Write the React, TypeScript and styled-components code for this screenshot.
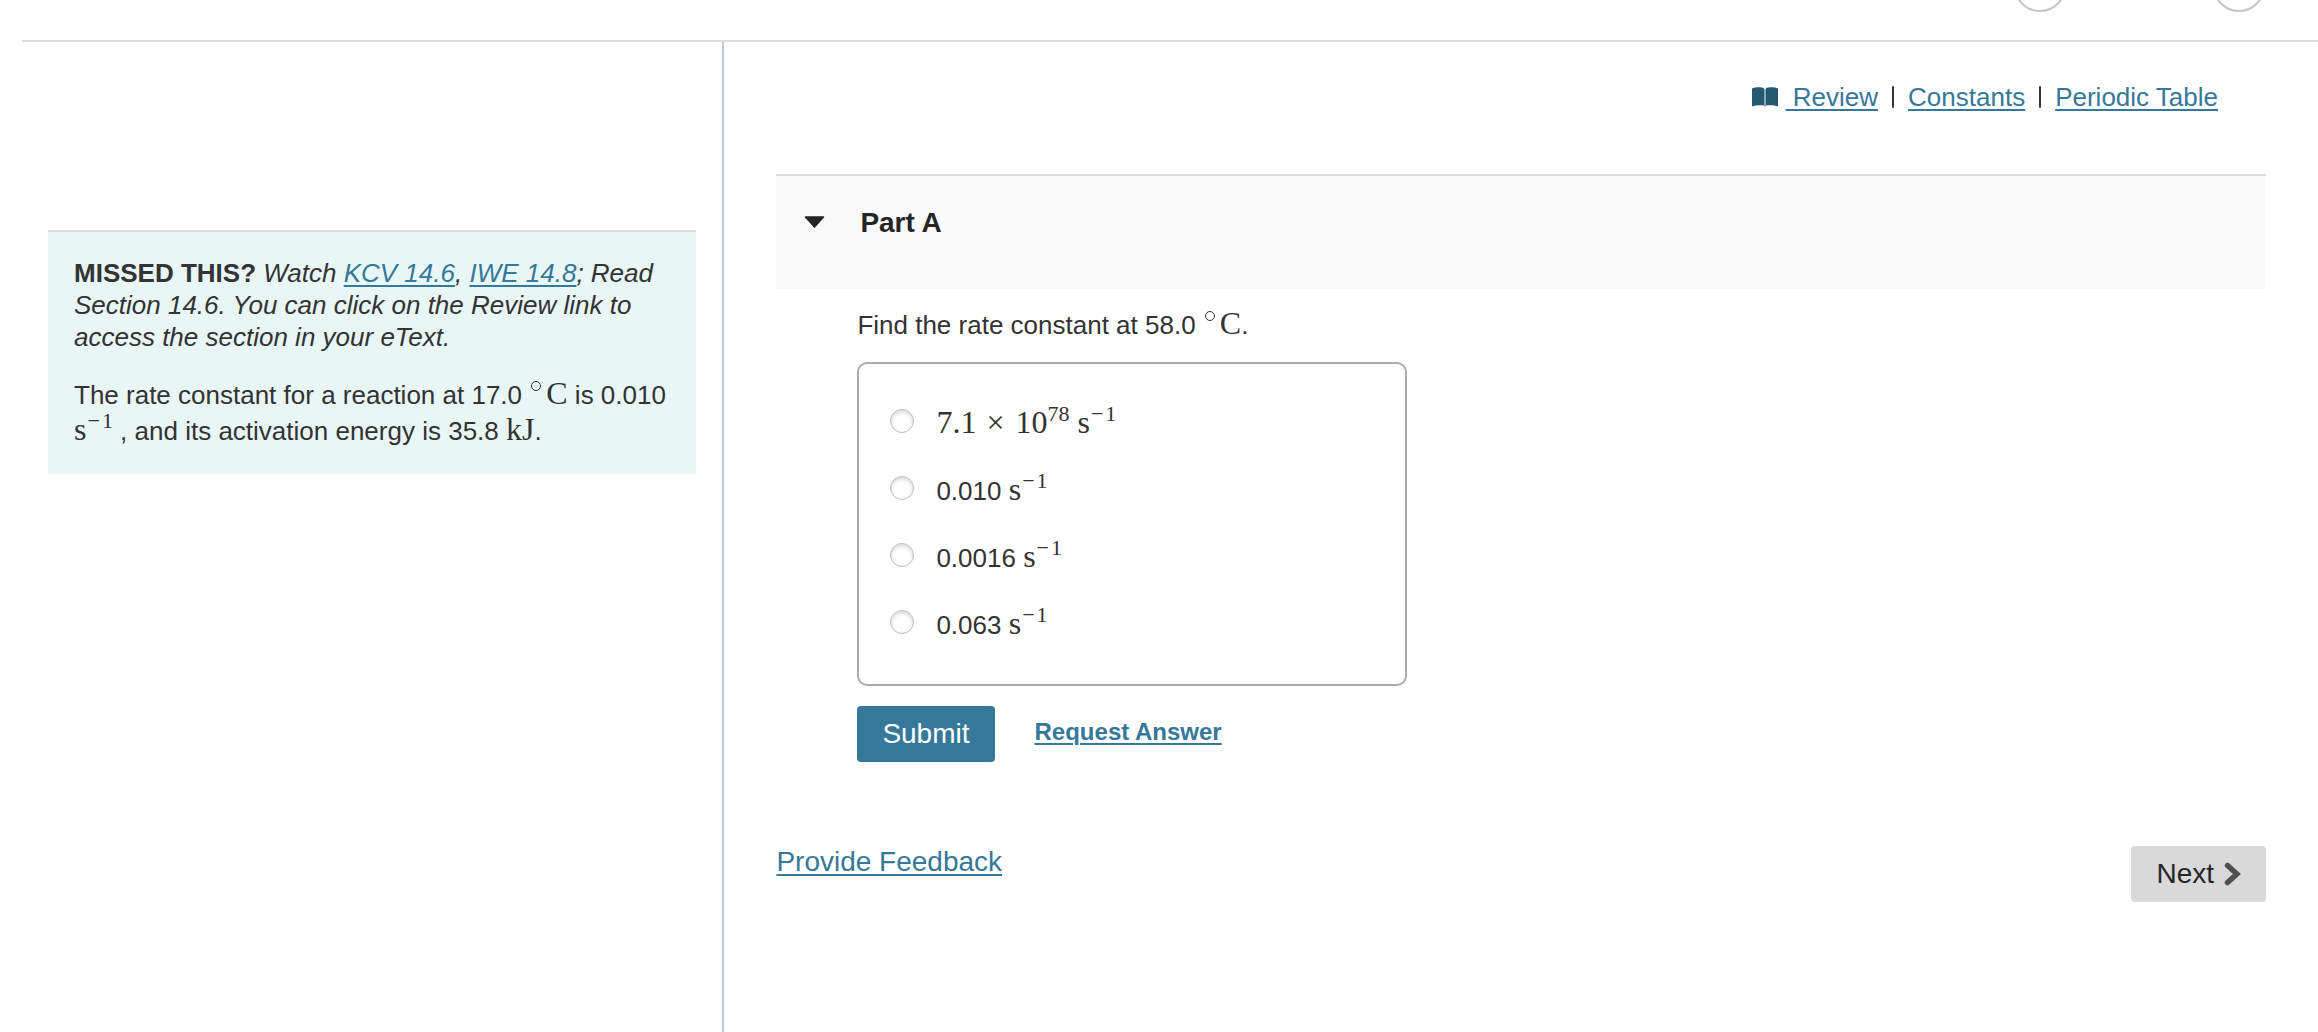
import React, { useState } from "react";
import styled, { createGlobalStyle } from "styled-components";

const Global = createGlobalStyle`
  *, *::before, *::after { box-sizing: border-box; }
  body {
    margin: 0;
    background: #fff;
    color: #333;
    font-family: "Liberation Sans", Arial, Helvetica, sans-serif;
    font-size: 26px;
    line-height: 32px;
  }
`;

const Page = styled.div`
  display: flex;
  flex-direction: column;
  min-height: 100vh;
  overflow: hidden;
`;

const TopBar = styled.header`
  display: flex;
  justify-content: flex-end;
  align-items: flex-end;
  gap: 147px;
  height: 42px;
  margin-left: 22px;
  padding: 0 53px 28px 0;
  border-bottom: 2px solid #ddd;
`;

const RoundButton = styled.button`
  flex: none;
  width: 52px;
  height: 52px;
  border: 2px solid #c6c6c6;
  border-radius: 50%;
  background: #fff;
`;

const Columns = styled.div`
  flex: 1;
  display: grid;
  grid-template-columns: 5fr 11fr;
`;

const Sidebar = styled.aside`
  padding: 188px 26px 0 48px;
  border-right: 2px solid #bccad6;
`;

const Intro = styled.section`
  padding: 25px 26px;
  border-top: 2px solid #ddd;
  background: #e8f6f6;
`;

const Hint = styled.p`
  margin: 0 0 24px;
  font-style: italic;

  strong { font-style: normal; }
`;

const Problem = styled.p`
  margin: 0;
  line-height: 36px;
`;

const Link = styled.a`
  color: #367899;
  text-decoration: underline;
  text-decoration-thickness: 2px;
  text-underline-offset: 3px;
`;

const Main = styled.main`
  padding: 0 52px;
`;

const Resources = styled.nav`
  display: flex;
  justify-content: flex-end;
  align-items: center;
  padding: 39px 48px 61px 0;
  white-space: pre;
`;

const BookIcon = styled.svg`
  width: 26px;
  height: 20px;
  margin-right: 8px;
`;

const Divider = styled.span`
  width: 2px;
  height: 22px;
  margin: 0 14px;
  border-radius: 1px;
  background: #333;
`;

const PartHeader = styled.button`
  display: flex;
  align-items: flex-start;
  width: 100%;
  height: 115px;
  padding: 30px 28px;
  border: 0;
  border-top: 2px solid #ddd;
  background: #f9f9f9;
  color: #252525;
  font: bold 28px/34px "Liberation Sans", Arial, sans-serif;
  text-align: left;
`;

const Caret = styled.svg`
  width: 21px;
  height: 12px;
  margin: 10px 35px 0 0;
`;

const PartBody = styled.form`
  margin: 0;
  padding: 18px 0 0 81px;
`;

const Question = styled.p`
  margin: 0 0 19px;
  line-height: 36px;
`;

const Options = styled.fieldset`
  display: flex;
  flex-direction: column;
  gap: 31px;
  max-width: 550px;
  margin: 0 0 20px;
  padding: 41px 30px 42px 31px;
  border: 2px solid #aaa;
  border-radius: 10px;
`;

const Option = styled.label`
  display: flex;
  align-items: center;
  gap: 22px;
  height: 36px;
  white-space: nowrap;
`;

const Radio = styled.input`
  appearance: none;
  flex: none;
  width: 24px;
  height: 24px;
  margin: 0 0 4px;
  border: 1px solid #bdbdbd;
  border-radius: 50%;
  background: #fff;
  box-shadow: inset 0 2px 4px rgba(0, 0, 0, 0.16);

  &:checked { background: radial-gradient(#367899 40%, #fff 45%); }
`;

const OptionText = styled.span`
  padding-top: 2px;
  line-height: 40px;
`;

const Math = styled.span`
  font-family: "Liberation Serif", "Times New Roman", serif;
  font-size: 32px;
  line-height: 0;
  white-space: nowrap;
`;

const Sup = styled.sup`
  font-size: 22px;
  line-height: 0;
  vertical-align: 12px;
`;

const Minus = styled.span`
  margin: 0 2px 0 1px;
`;

const Times = styled.span`
  margin: 0 3px 0 2px;
`;

const Ring = styled.span`
  display: inline-block;
  width: 10px;
  height: 10px;
  margin: 0 5px 0 2px;
  border: 1px solid #333;
  border-radius: 50%;
  vertical-align: 13px;
`;

const Actions = styled.div`
  display: flex;
  align-items: center;
  gap: 40px;
`;

const Button = styled.button<{ $primary?: boolean }>`
  display: flex;
  align-items: center;
  gap: 10px;
  height: 56px;
  padding: 0 25px;
  border: 0;
  border-radius: 4px;
  background: ${(p) => (p.$primary ? "#367899" : "#d9d9d9")};
  color: ${(p) => (p.$primary ? "#fff" : "#252525")};
  font: 28px/32px "Liberation Sans", Arial, sans-serif;
`;

const RequestLink = styled(Link)`
  padding-bottom: 4px;
  font-size: 24px;
  font-weight: bold;
`;

const Footer = styled.footer`
  display: flex;
  justify-content: space-between;
  align-items: flex-start;
  padding-top: 84px;
`;

const FeedbackLink = styled(Link)`
  font-size: 28px;
`;

const Chevron = styled.svg`
  width: 17px;
  height: 24px;
`;

const PerSecond = () => (
  <Math>
    s<Sup><Minus>−</Minus>1</Sup>
  </Math>
);

const Celsius = () => (
  <Math><Ring role="img" aria-label="degrees" />C</Math>
);

const answers = [
  { id: "a", body: <Math>7.1 <Times>×</Times> 10<Sup>78</Sup> <PerSecond /></Math> },
  { id: "b", body: <>0.010 <PerSecond /></> },
  { id: "c", body: <>0.0016 <PerSecond /></> },
  { id: "d", body: <>0.063 <PerSecond /></> },
];

export default function App() {
  const [choice, setChoice] = useState("");
  const [open, setOpen] = useState(true);

  return (
    <>
      <Global />
      <Page>
        <TopBar>
          <RoundButton type="button" aria-label="Previous item" />
          <RoundButton type="button" aria-label="Next item" />
        </TopBar>
        <Columns>
          <Sidebar>
            <Intro>
              <Hint>
                <strong>MISSED THIS?</strong> Watch <Link href="#kcv">KCV 14.6</Link>,{" "}
                <Link href="#iwe">IWE 14.8</Link>; Read Section 14.6. You can click on the
                Review link to access the section in your eText.
              </Hint>
              <Problem>
                The rate constant for a reaction at 17.0 <Celsius /> is 0.010 <PerSecond />
                {" "}, and its activation energy is 35.8 <Math>kJ</Math>.
              </Problem>
            </Intro>
          </Sidebar>
          <Main>
            <Resources>
              <BookIcon viewBox="0 0 26 20" aria-hidden="true">
                <path d="M0 1.5C3 0 9.500 0 12 1.200V18.500C9 18 3 18 0 19.500Z" fill="#255a6e" />
                <path d="M26 1.500C23 0 16.500 0 14 1.200V18.500C17 18 23 18 26 19.500Z" fill="#255a6e" />
                <path d="M13 2V19.500" stroke="#8fa9b4" strokeWidth="2" />
              </BookIcon>
              <Link href="#review">{" Review"}</Link>
              <Divider />
              <Link href="#constants">Constants</Link>
              <Divider />
              <Link href="#periodic-table">Periodic Table</Link>
            </Resources>
            <PartHeader type="button" aria-expanded={open} onClick={() => setOpen(!open)}>
              <Caret viewBox="0 0 21 12" aria-hidden="true">
                <path d="M1.500 1H19.500L10.500 11Z" fill="#252525" stroke="#252525" strokeWidth="1.500" strokeLinejoin="round" />
              </Caret>
              Part A
            </PartHeader>
            {open && (
              <PartBody onSubmit={(e) => e.preventDefault()}>
                <Question>Find the rate constant at 58.0 <Celsius />.</Question>
                <Options aria-label="Rate constant">
                  {answers.map((a) => (
                    <Option key={a.id}>
                      <Radio
                        type="radio"
                        name="answer"
                        value={a.id}
                        checked={choice === a.id}
                        onChange={() => setChoice(a.id)}
                      />
                      <OptionText>{a.body}</OptionText>
                    </Option>
                  ))}
                </Options>
                <Actions>
                  <Button $primary type="submit">Submit</Button>
                  <RequestLink href="#request-answer">Request Answer</RequestLink>
                </Actions>
              </PartBody>
            )}
            <Footer>
              <FeedbackLink href="#feedback">Provide Feedback</FeedbackLink>
              <Button type="button">
                Next
                <Chevron viewBox="0 0 17 24" aria-hidden="true">
                  <path d="M3.500 3.500L13 12L3.500 20.500" fill="none" stroke="#505050" strokeWidth="5.500" strokeLinecap="round" />
                </Chevron>
              </Button>
            </Footer>
          </Main>
        </Columns>
      </Page>
    </>
  );
}
